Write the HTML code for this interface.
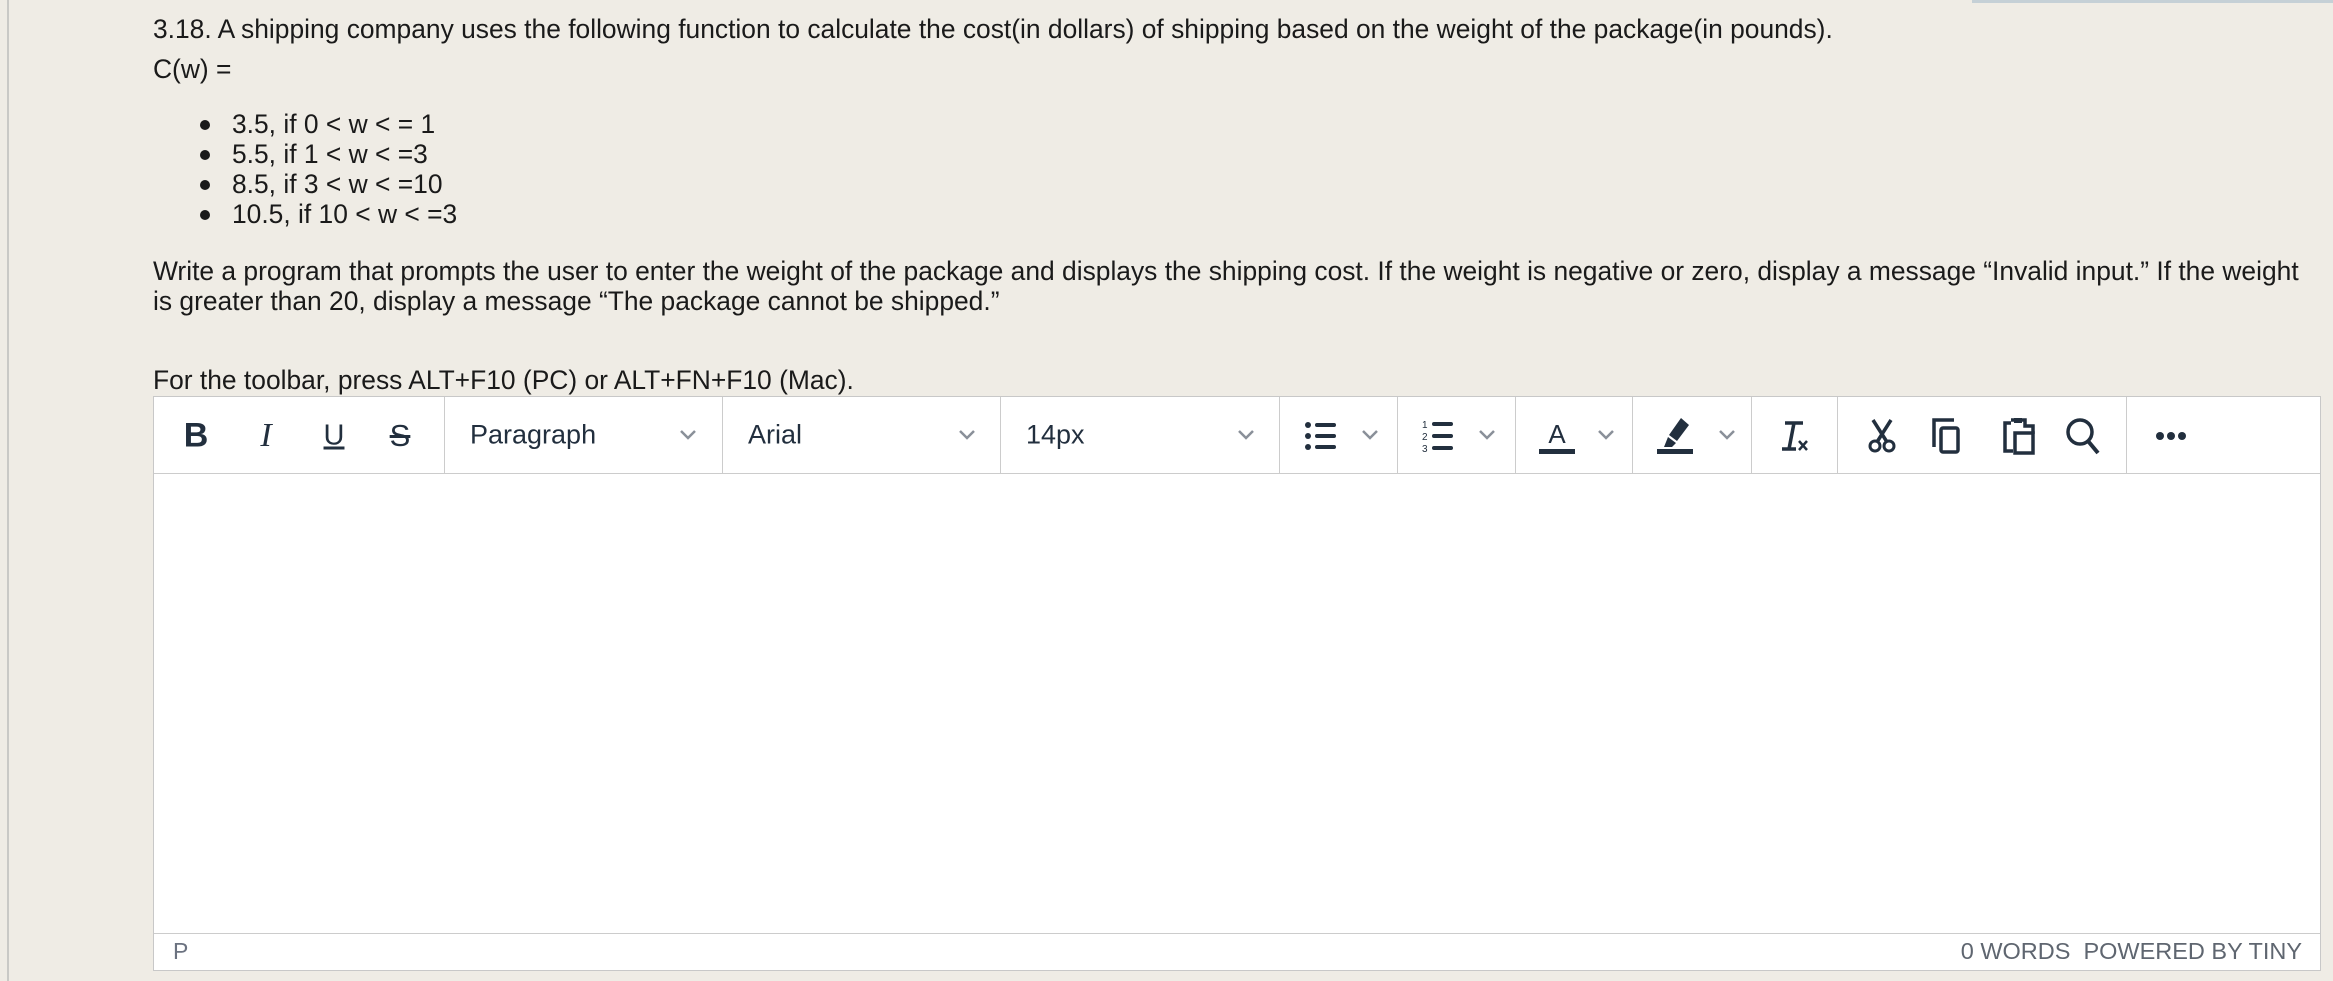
<!DOCTYPE html>
<html><head><meta charset="utf-8"><style>
body{margin:0;width:2333px;height:981px;background:#efece5;font-family:"Liberation Sans",Arial,sans-serif;color:#1a1a1a;position:relative;overflow:hidden}
.a{position:absolute;white-space:nowrap}
.t{font-size:26.4px;line-height:30px}
.d{position:absolute;left:0;top:11px;width:10px;height:10px;border-radius:50%;background:#1a1a1a}
.ed{position:absolute;left:153px;top:396px;width:2166px;height:573px;background:#fff;border:1px solid #c8c8c8}
.tb{position:absolute;left:0;top:0;right:0;height:76px;border-bottom:1px solid #ccc}
.sep{position:absolute;top:0;height:76px;width:1px;background:#ccc}
.ic{position:absolute;top:39px;transform:translate(-50%,-50%);color:#222f3e}
.tx{position:absolute;top:38px;transform:translateY(-50%);font-size:27px;color:#222f3e}
.ch{position:absolute;top:38px;transform:translate(-50%,-50%)}
</style></head><body>
<div class="a" style="left:0;top:0;width:7px;height:981px;border-right:2px solid #c9c9c6;background:#efece5"></div>
<div class="a" style="left:1972px;top:0;width:361px;height:3px;background:#c5d0d6"></div>
<div class="a t" style="left:153px;top:14px">3.18. A shipping company uses the following function to calculate the cost(in dollars) of shipping based on the weight of the package(in pounds).</div>
<div class="a t" style="left:153px;top:54px">C(w) =</div>
<div class="a t" style="left:200px;top:109px"><span class="d"></span><span style="margin-left:32px">3.5, if 0 &lt; w &lt; = 1</span></div>
<div class="a t" style="left:200px;top:139px"><span class="d"></span><span style="margin-left:32px">5.5, if 1 &lt; w &lt; =3</span></div>
<div class="a t" style="left:200px;top:169px"><span class="d"></span><span style="margin-left:32px">8.5, if 3 &lt; w &lt; =10</span></div>
<div class="a t" style="left:200px;top:199px"><span class="d"></span><span style="margin-left:32px">10.5, if 10 &lt; w &lt; =3</span></div>
<div class="a t" style="left:153px;top:256px">Write a program that prompts the user to enter the weight of the package and displays the shipping cost. If the weight is negative or zero, display a message “Invalid input.” If the weight</div>
<div class="a t" style="left:153px;top:286px">is greater than 20, display a message “The package cannot be shipped.”</div>
<div class="a t" style="left:153px;top:365px">For the toolbar, press ALT+F10 (PC) or ALT+FN+F10 (Mac).</div>
<div class="ed">
<div class="tb">
<div class="sep" style="left:290px"></div><div class="sep" style="left:568px"></div><div class="sep" style="left:846px"></div><div class="sep" style="left:1125px"></div><div class="sep" style="left:1243px"></div><div class="sep" style="left:1361px"></div><div class="sep" style="left:1478px"></div><div class="sep" style="left:1597px"></div><div class="sep" style="left:1683px"></div><div class="sep" style="left:1972px"></div>
<div class="ic" style="left:42px;font-weight:bold;font-size:34px">B</div>
<div class="ic" style="left:112px;font-style:italic;font-size:34px;font-family:'Liberation Serif',serif">I</div>
<div class="ic" style="left:180px;font-size:29px;text-decoration:underline;text-decoration-thickness:3px">U</div>
<div class="ic" style="left:246px;font-size:31px;text-decoration:line-through;text-decoration-thickness:3px">S</div>
<div class="tx" style="left:316px">Paragraph</div>
<div class="tx" style="left:594px">Arial</div>
<div class="tx" style="left:872px">14px</div>
<svg class="ch" style="left:534px" width="18" height="12"><path d="M2 2l7 7 7-7" fill="none" stroke="#8a9099" stroke-width="2.5"/></svg>
<svg class="ch" style="left:813px" width="18" height="12"><path d="M2 2l7 7 7-7" fill="none" stroke="#8a9099" stroke-width="2.5"/></svg>
<svg class="ch" style="left:1092px" width="18" height="12"><path d="M2 2l7 7 7-7" fill="none" stroke="#8a9099" stroke-width="2.5"/></svg>
<svg class="ch" style="left:1216px" width="18" height="12"><path d="M2 2l7 7 7-7" fill="none" stroke="#8a9099" stroke-width="2.5"/></svg>
<svg class="ch" style="left:1333px" width="18" height="12"><path d="M2 2l7 7 7-7" fill="none" stroke="#8a9099" stroke-width="2.5"/></svg>
<svg class="ch" style="left:1452px" width="18" height="12"><path d="M2 2l7 7 7-7" fill="none" stroke="#8a9099" stroke-width="2.5"/></svg>
<svg class="ch" style="left:1573px" width="18" height="12"><path d="M2 2l7 7 7-7" fill="none" stroke="#8a9099" stroke-width="2.5"/></svg>
<svg class="ic" style="left:1167px" width="34" height="34" viewBox="0 0 34 34"><g fill="#222f3e"><circle cx="4" cy="6" r="3"/><circle cx="4" cy="17" r="3"/><circle cx="4" cy="28" r="3"/><rect x="11" y="4" width="21" height="4" rx="2"/><rect x="11" y="15" width="21" height="4" rx="2"/><rect x="11" y="26" width="21" height="4" rx="2"/></g></svg>
<svg class="ic" style="left:1284px" width="34" height="36" viewBox="0 0 34 36"><g fill="#222f3e"><rect x="11" y="4" width="21" height="4" rx="2"/><rect x="11" y="16" width="21" height="4" rx="2"/><rect x="11" y="28" width="21" height="4" rx="2"/></g><g font-size="10" fill="#222f3e" font-family="Liberation Sans"><text x="1" y="10">1</text><text x="1" y="22">2</text><text x="1" y="34">3</text></g></svg>
<svg class="ic" style="left:1403px" width="36" height="40" viewBox="0 0 36 40"><text x="18" y="27" text-anchor="middle" font-size="26" fill="#222f3e" font-family="Liberation Sans">A</text><rect x="0" y="33" width="36" height="5" fill="#222f3e"/></svg>
<svg class="ic" style="left:1521px" width="36" height="40" viewBox="0 0 36 40"><path d="M24 2l8 7-12 16-8-6z M11 21l8 6-4 4h-8z" fill="#222f3e"/><rect x="0" y="33" width="36" height="5" fill="#222f3e"/></svg>
<svg class="ic" style="left:1640px" width="34" height="36" viewBox="0 0 34 36"><path d="M8 5h18M17 5l-5 26M5 31h14" stroke="#222f3e" stroke-width="3.5" fill="none"/><path d="M22 23l8 9M30 23l-8 9" stroke="#222f3e" stroke-width="2.5"/></svg>
<svg class="ic" style="left:1728px" width="30" height="36" viewBox="0 0 30 36"><path d="M6 2l14 22M24 2L10 24" stroke="#222f3e" stroke-width="3.5"/><circle cx="8" cy="28" r="5" fill="none" stroke="#222f3e" stroke-width="3"/><circle cx="22" cy="28" r="5" fill="none" stroke="#222f3e" stroke-width="3"/></svg>
<svg class="ic" style="left:1792px" width="32" height="38" viewBox="0 0 32 38"><path d="M4 30V3h20" stroke="#222f3e" stroke-width="3.5" fill="none"/><rect x="11" y="11" width="17" height="24" rx="2" fill="none" stroke="#222f3e" stroke-width="3.5"/></svg>
<svg class="ic" style="left:1865px" width="34" height="38" viewBox="0 0 34 38"><path d="M9 6H3v28h8" stroke="#222f3e" stroke-width="3.5" fill="none"/><path d="M9 3h14v6h8v8" stroke="#222f3e" stroke-width="3.5" fill="none"/><rect x="13" y="16" width="18" height="20" fill="none" stroke="#222f3e" stroke-width="3.5"/><rect x="12" y="1" width="8" height="5" fill="#222f3e"/></svg>
<svg class="ic" style="left:1929px" width="36" height="38" viewBox="0 0 36 38"><circle cx="15" cy="15" r="12" fill="none" stroke="#222f3e" stroke-width="3.5"/><path d="M23 24l10 12" stroke="#222f3e" stroke-width="4"/></svg>
<svg class="ic" style="left:2017px" width="32" height="10" viewBox="0 0 32 10"><g fill="#222f3e"><circle cx="5" cy="5" r="4"/><circle cx="16" cy="5" r="4"/><circle cx="27" cy="5" r="4"/></g></svg>
</div>
<div class="a" style="left:0;right:0;top:536px;height:1px;background:#ccc"></div>
<div class="a" style="left:19px;top:541px;font-size:23px;color:#6b7280">P</div>
<div class="a" style="right:18px;top:541px;font-size:23.5px;color:#5f6670">0 WORDS&nbsp;&nbsp;POWERED BY TINY</div>
</div>
</body></html>
